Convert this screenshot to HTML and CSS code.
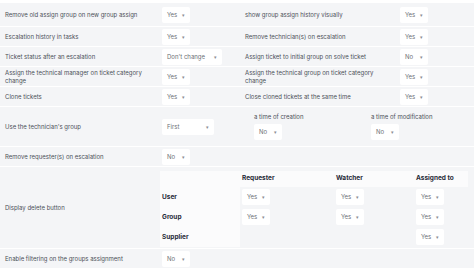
FILE: index.html
```html
<!DOCTYPE html>
<html lang="en">
<head>
<meta charset="UTF-8">
<title>Assistance options</title>
<link rel="stylesheet" href="styles.css">
</head>
<body>

<table class="config">
  <colgroup>
    <col class="c-label">
    <col class="c-value">
    <col class="c-label2">
    <col class="c-value2">
  </colgroup>
  <tr class="first">
    <td>Remove old assign group on new group assign</td>
    <td><span class="sel">Yes</span></td>
    <td>show group assign history visually</td>
    <td><span class="sel">Yes</span></td>
  </tr>
  <tr>
    <td>Escalation history in tasks</td>
    <td><span class="sel">Yes</span></td>
    <td>Remove technician(s) on escalation</td>
    <td><span class="sel">Yes</span></td>
  </tr>
  <tr>
    <td>Ticket status after an escalation</td>
    <td><span class="sel wide">Don't change</span></td>
    <td>Assign ticket to initial group on solve ticket</td>
    <td><span class="sel">No</span></td>
  </tr>
  <tr>
    <td>Assign the technical manager on ticket category change</td>
    <td><span class="sel">Yes</span></td>
    <td>Assign the technical group on ticket category change</td>
    <td><span class="sel">Yes</span></td>
  </tr>
  <tr>
    <td>Clone tickets</td>
    <td><span class="sel">Yes</span></td>
    <td>Close cloned tickets at the same time</td>
    <td><span class="sel">Yes</span></td>
  </tr>
  <tr class="tall">
    <td>Use the technician's group</td>
    <td><span class="sel mid">First</span></td>
    <td colspan="2" class="pair-cell">
      <div class="pair">
        <div class="pair-item">
          <div class="pair-label">a time of creation</div>
          <span class="sel">No</span>
        </div>
        <div class="pair-item">
          <div class="pair-label">a time of modification</div>
          <span class="sel">No</span>
        </div>
      </div>
    </td>
  </tr>
  <tr>
    <td>Remove requester(s) on escalation</td>
    <td><span class="sel">No</span></td>
    <td></td>
    <td></td>
  </tr>
  <tr>
    <td>Display delete button</td>
    <td colspan="3" class="nested">
      <table class="actors">
        <tr>
          <th class="corner"></th>
          <th>Requester</th>
          <th>Watcher</th>
          <th>Assigned to</th>
        </tr>
        <tr>
          <th>User</th>
          <td><span class="sel">Yes</span></td>
          <td><span class="sel">Yes</span></td>
          <td><span class="sel">Yes</span></td>
        </tr>
        <tr>
          <th>Group</th>
          <td><span class="sel">Yes</span></td>
          <td><span class="sel">Yes</span></td>
          <td><span class="sel">Yes</span></td>
        </tr>
        <tr>
          <th>Supplier</th>
          <td></td>
          <td></td>
          <td><span class="sel">Yes</span></td>
        </tr>
      </table>
    </td>
  </tr>
  <tr>
    <td>Enable filtering on the groups assignment</td>
    <td><span class="sel">No</span></td>
    <td></td>
    <td></td>
  </tr>
</table>

</body>
</html>
```

FILE: styles.css
```css
body {
  margin: 0;
  padding-top: 3px;
  background-color: #ffffff;
  font-family: Inter, "Noto Sans", sans-serif;
  font-size: 6px;
  color: #4b5058;
}

.config {
  width: 474px;
  border-collapse: collapse;
  table-layout: fixed;
}

.c-label { width: 160px; }
.c-value { width: 80px; }
.c-label2 { width: 158px; }
.c-value2 { width: 76px; }

.config > tbody > tr > td {
  background-color: #f4f5f7;
  border-bottom: 1px solid #ffffff;
  padding: 2px 5px 1px;
  height: 16px;
  vertical-align: middle;
  line-height: 8px;
}

.config > tbody > tr > td:nth-child(2),
.config > tbody > tr > td:nth-child(4) {
  padding-left: 2px;
}

.config > tbody > tr.first > td {
  padding-top: 4px;
  padding-bottom: 3px;
}

.config > tbody > tr.tall > td {
  height: 36px;
}

/* fake select box */
.sel {
  display: inline-flex;
  align-items: center;
  justify-content: space-between;
  box-sizing: border-box;
  width: 28px;
  height: 16px;
  padding: 0 5px;
  background-color: #ffffff;
  border-radius: 2px;
  color: #6b6f76;
  font-size: 6px;
}

.sel::after {
  content: "▾";
  font-size: 5px;
  color: #8a8e94;
}

.sel.wide { width: 60px; }
.sel.mid { width: 52px; }

.config > tbody > tr > td.pair-cell {
  padding: 0;
}

.pair {
  display: flex;
}

.pair-item {
  width: 120px;
  box-sizing: border-box;
  padding-left: 14px;
}

.pair-label {
  margin-bottom: 3px;
  line-height: 8px;
}

.config > tbody > tr > td.nested {
  padding: 4px 6px 1px 0;
}

.actors {
  width: 308px;
  border-collapse: collapse;
  table-layout: fixed;
}

.actors th,
.actors td {
  text-align: left;
  height: 16px;
  padding: 2px 2px;
  vertical-align: middle;
}

.actors th {
  background-color: #fbfbfc;
  font-weight: bold;
  color: #1f2937;
  font-size: 6.5px;
}

.actors tr:first-child th {
  padding-top: 0;
  padding-bottom: 2px;
  height: 14px;
}

.actors th:nth-child(1) { width: 76px; }
.actors th:nth-child(2) { width: 90px; }
.actors th:nth-child(3) { width: 76px; }
```
